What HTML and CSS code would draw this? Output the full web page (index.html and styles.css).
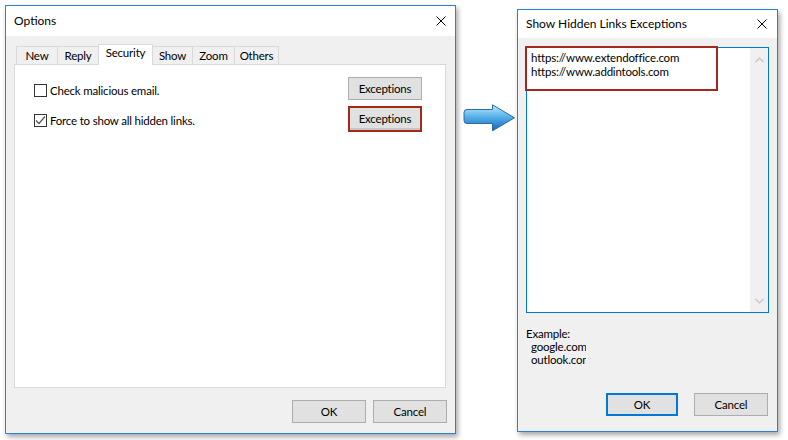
FILE: index.html
```html
<!DOCTYPE html>
<html lang="en">
<head>
    <meta charset="UTF-8">
    <title>Show Hidden Links Exceptions</title>
    <link rel="stylesheet" href="styles.css">
</head>
<body>
    <div class="scene">
        <!-- Options dialog -->
        <div class="dialog options">
            <div class="titlebar">
                <span class="title">Options</span>
                <svg class="close" width="10" height="10" viewBox="0 0 10 10"><path d="M0.5 0.5 L9.5 9.5 M9.5 0.5 L0.5 9.5" stroke="#000" stroke-width="1"/></svg>
            </div>
            <div class="client">
                <div class="tabs">
                    <div class="tab w-new">New</div>
                    <div class="tab w-reply">Reply</div>
                    <div class="tab w-security active">Security</div>
                    <div class="tab w-show">Show</div>
                    <div class="tab w-zoom">Zoom</div>
                    <div class="tab w-others">Others</div>
                </div>
                <div class="panel">
                    <div class="opt-row first">
                        <label class="check">
                            <span class="box"></span>
                            <span>Check malicious email.</span>
                        </label>
                        <button class="btn">Exceptions</button>
                    </div>
                    <div class="opt-row second">
                        <label class="check">
                            <span class="box"><svg width="11" height="11" viewBox="0 0 11 11"><path d="M1 5.5 L4 8.5 L10 1.5" fill="none" stroke="#555" stroke-width="1.2"/></svg></span>
                            <span>Force to show all hidden links.</span>
                        </label>
                        <button class="btn marked">Exceptions</button>
                    </div>
                </div>
                <div class="footer">
                    <button class="btn">OK</button>
                    <button class="btn">Cancel</button>
                </div>
            </div>
        </div>

        <svg class="arrow" width="53" height="28" viewBox="0 0 53 28">
            <defs>
                <linearGradient id="arrowFill" x1="0" y1="0" x2="0" y2="1">
                    <stop offset="0" stop-color="#c2ebfc"/>
                    <stop offset="0.45" stop-color="#58b3ea"/>
                    <stop offset="1" stop-color="#1763b8"/>
                </linearGradient>
            </defs>
            <path d="M4 5.5 H29.5 V0.8 L51.5 13.8 L29.5 26.8 V19.5 H4 Q1 19.5 1 16.5 V8.5 Q1 5.5 4 5.5 Z" fill="url(#arrowFill)" stroke="#2c6aa6" stroke-width="1"/>
        </svg>

        <!-- Exceptions dialog -->
        <div class="dialog exceptions">
            <div class="titlebar">
                <span class="title">Show Hidden Links Exceptions</span>
                <svg class="close" width="10" height="10" viewBox="0 0 10 10"><path d="M0.5 0.5 L9.5 9.5 M9.5 0.5 L0.5 9.5" stroke="#000" stroke-width="1"/></svg>
            </div>
            <div class="client">
                <div class="listbox">
                    <div class="items">
                        <div>https://www.extendoffice.com</div>
                        <div>https://www.addintools.com</div>
                    </div>
                    <div class="scrollbar">
                        <svg width="9" height="6" viewBox="0 0 9 6"><path d="M0.5 5 L4.5 1 L8.5 5" fill="none" stroke="#c4c4c4" stroke-width="1.2"/></svg>
                        <svg width="9" height="6" viewBox="0 0 9 6"><path d="M0.5 1 L4.5 5 L8.5 1" fill="none" stroke="#c4c4c4" stroke-width="1.2"/></svg>
                    </div>
                    <div class="highlight"></div>
                </div>
                <div class="example">
                    <div>Example:</div>
                    <div class="indent">google.com</div>
                    <div class="indent">outlook.com</div>
                </div>
                <div class="footer">
                    <button class="btn default">OK</button>
                    <button class="btn">Cancel</button>
                </div>
            </div>
        </div>
    </div>
</body>
</html>
```

FILE: styles.css
```css
* {
    box-sizing: border-box;
}
body {
    margin: 0;
    background: #fff;
    font: 11.5px/1 "Lato", sans-serif;
    letter-spacing: -0.2px;
    color: #000;
}
.scene {
    display: flex;
    align-items: flex-start;
    width: 788px;
    height: 440px;
}
.dialog {
    display: flex;
    flex-direction: column;
    border: 1px solid #2a7fd6;
    background: #f0f0f0;
    box-shadow: 2px 3px 5px rgba(0, 0, 0, 0.35);
}
.titlebar {
    display: flex;
    align-items: center;
    justify-content: space-between;
    background: #fff;
    font-size: 12px;
    letter-spacing: 0;
}
.close {
    display: block;
}

/* left dialog */
.options {
    width: 451px;
    height: 429px;
    margin: 5px 0 0 5px;
}
.options .titlebar {
    height: 30px;
    padding: 0 9px 0 8px;
}
.options .client {
    padding-top: 8px;
}
.tabs {
    display: flex;
    align-items: flex-end;
    height: 20px;
    padding-left: 10px;
}
.tab {
    height: 18px;
    border: 1px solid #d9d9d9;
    border-bottom: none;
    background: #f0f0f0;
    text-align: center;
    line-height: 17px;
    margin-left: -1px;
}
.tab:first-child {
    margin-left: 0;
}
.tab.active {
    position: relative;
    z-index: 1;
    height: 21px;
    margin-bottom: -1px;
    background: #fff;
    line-height: 15px;
}
.w-new { width: 42px; }
.w-reply { width: 42px; }
.w-security { width: 55px; }
.w-show { width: 41px; }
.w-zoom { width: 43px; }
.w-others { width: 45px; }

.panel {
    height: 324px;
    margin: 0 9px 0 8px;
    padding: 12px 23px 0 19px;
    background: #fff;
    border: 1px solid #d9d9d9;
}
.opt-row {
    display: flex;
    align-items: flex-start;
    justify-content: space-between;
}
.opt-row.second {
    margin-top: 6px;
}
.check {
    display: flex;
    align-items: center;
    gap: 3px;
}
.first .check {
    margin-top: 7px;
}
.second .check {
    margin-top: 8px;
}
.box {
    display: flex;
    align-items: center;
    justify-content: center;
    width: 13px;
    height: 13px;
    border: 1px solid #333;
    background: #fff;
}
.btn {
    width: 74px;
    height: 23px;
    padding: 0;
    font: inherit;
    letter-spacing: inherit;
    color: #000;
    background: #e1e1e1;
    border: 1px solid #adadad;
}
.btn.marked {
    height: 26px;
    border: 2px solid #a3291a;
    box-shadow: inset 0 -2px 0 #c8c8c8;
}
.options .footer {
    display: flex;
    justify-content: flex-end;
    gap: 7px;
    margin-top: 12px;
    padding-right: 8px;
}

.arrow {
    margin: 104px 0 0 7px;
}

/* right dialog */
.exceptions {
    width: 261px;
    height: 423px;
    margin: 9px 0 0 1px;
}
.exceptions .titlebar {
    height: 28px;
    padding: 0 10px 0 8px;
}
.exceptions .client {
    flex: 1;
    display: flex;
    flex-direction: column;
    padding: 9px 8px 15px 8px;
}
.listbox {
    position: relative;
    display: flex;
    height: 266px;
    background: #fff;
    border: 1px solid #0078d7;
}
.items {
    flex: 1;
    padding: 3px 4px;
    line-height: 14px;
}
.scrollbar {
    display: flex;
    flex-direction: column;
    justify-content: space-between;
    align-items: center;
    width: 18px;
    padding: 9px 0 8px;
    background: #f0f0f0;
}
.highlight {
    position: absolute;
    left: -2px;
    top: -2px;
    width: 193px;
    height: 45px;
    border: 2px solid #a3291a;
}
.example {
    width: 60px;
    margin-top: 14px;
    line-height: 13px;
    overflow: hidden;
    white-space: nowrap;
}
.example .indent {
    padding-left: 5px;
}
.exceptions .footer {
    display: flex;
    justify-content: flex-end;
    gap: 16px;
    margin-top: auto;
    padding-right: 1px;
}
.exceptions .footer .btn {
    height: 23px;
}
.btn.default {
    width: 72px;
    border: 2px solid #0078d7;
}
```
